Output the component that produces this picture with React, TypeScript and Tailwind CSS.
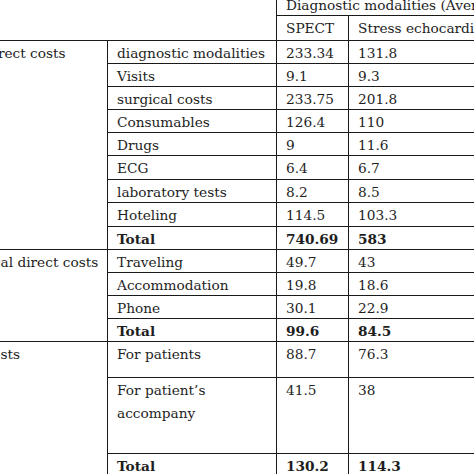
import React from 'react';

type Item = { label: string; spect: string; stress: string; bold?: boolean; h: string };

type Group = { title: string; items: Item[] };

const groups: Group[] = [
  {
    title: 'Medical direct costs',
    items: [
      { label: 'diagnostic modalities', spect: '233.34', stress: '131.8', h: '23px' },
      { label: 'Visits', spect: '9.1', stress: '9.3', h: '23px' },
      { label: 'surgical costs', spect: '233.75', stress: '201.8', h: '23px' },
      { label: 'Consumables', spect: '126.4', stress: '110', h: '23px' },
      { label: 'Drugs', spect: '9', stress: '11.6', h: '23px' },
      { label: 'ECG', spect: '6.4', stress: '6.7', h: '24px' },
      { label: 'laboratory tests', spect: '8.2', stress: '8.5', h: '23px' },
      { label: 'Hoteling', spect: '114.5', stress: '103.3', h: '24px' },
      { label: 'Total', spect: '740.69', stress: '583', bold: true, h: '23px' },
    ],
  },
  {
    title: 'Non-medical direct costs',
    items: [
      { label: 'Traveling', spect: '49.7', stress: '43', h: '23px' },
      { label: 'Accommodation', spect: '19.8', stress: '18.6', h: '23px' },
      { label: 'Phone', spect: '30.1', stress: '22.9', h: '23px' },
      { label: 'Total', spect: '99.6', stress: '84.5', bold: true, h: '23px' },
    ],
  },
  {
    title: 'Indirect costs',
    items: [
      { label: 'For patients', spect: '88.7', stress: '76.3', h: '36px' },
      { label: 'For patient\u2019s accompany', spect: '41.5', stress: '38', h: '76px' },
      { label: 'Total', spect: '130.2', stress: '114.3', bold: true, h: '23px' },
    ],
  },
];

const rowHeights = ['23px', '24px', ...groups.flatMap((g) => g.items.map((i) => i.h))];

export default function App() {
  let row = 3;

  return (
    <div className="w-[474px] h-[474px] overflow-hidden bg-white">
      <div
        className="grid -ml-[85px] -mt-[7px] w-[640px] grid-cols-[193px_168px_72px_207px] font-['DejaVu_Serif',serif] text-[13.7px] leading-[23px] text-[#1e1e1e]"
        style={{ gridTemplateRows: rowHeights.join(' ') }}
      >
        {/* header */}
        <div className="col-start-1 col-span-2 row-start-1 row-span-2" />
        <div className="col-start-3 col-span-2 row-start-1 border-l-[1.5px] border-b-[1.5px] border-[#1a1a1a] pl-[9px] pt-[1px] whitespace-nowrap overflow-hidden">
          Diagnostic modalities (Average costs)
        </div>
        <div className="col-start-3 row-start-2 border-l-[1.5px] border-[#1a1a1a] pl-[9px] pt-[1px]">SPECT</div>
        <div className="col-start-4 row-start-2 border-l-[1.5px] border-[#1a1a1a] pl-[9px] pt-[1px] whitespace-nowrap overflow-hidden">
          Stress echocardiography
        </div>

        {groups.map((g) => {
          const start = row;
          row += g.items.length;
          return (
            <React.Fragment key={g.title}>
              <div
                className="col-start-1 border-t-[1.5px] border-r-[1.5px] border-[#1a1a1a] pl-[10px] pt-[1px] whitespace-nowrap"
                style={{ gridRow: `${start} / span ${g.items.length}` }}
              >
                {g.title}
              </div>
              {g.items.map((it, i) => (
                <React.Fragment key={it.label + i}>
                  <div
                    className={`col-start-2 border-t-[1.5px] border-[#1a1a1a] pl-[9px] pr-2 pt-[1px] ${it.bold ? 'font-bold' : ''}`}
                    style={{ gridRow: start + i }}
                  >
                    {it.label}
                  </div>
                  <div
                    className={`col-start-3 border-t-[1.5px] border-l-[1.5px] border-[#1a1a1a] pl-[9px] pt-[1px] ${it.bold ? 'font-bold' : ''}`}
                    style={{ gridRow: start + i }}
                  >
                    {it.spect}
                  </div>
                  <div
                    className={`col-start-4 border-t-[1.5px] border-l-[1.5px] border-[#1a1a1a] pl-[9px] pt-[1px] ${it.bold ? 'font-bold' : ''}`}
                    style={{ gridRow: start + i }}
                  >
                    {it.stress}
                  </div>
                </React.Fragment>
              ))}
            </React.Fragment>
          );
        })}
      </div>
    </div>
  );
}
